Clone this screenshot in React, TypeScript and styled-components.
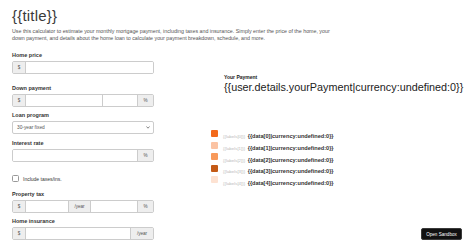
import React from 'react'
import styled, { createGlobalStyle } from 'styled-components'

const GlobalStyle = createGlobalStyle`
  html, body {
    margin: 0;
    padding: 0;
    background: #fff;
  }
  body {
    font-family: "Liberation Sans", Arial, sans-serif;
    color: #333;
  }
`

const Page = styled.div`
  padding: 7px 0 0 12px;
`

const Title = styled.h1`
  margin: 0;
  font-size: 15px;
  line-height: 17px;
  font-weight: 400;
  color: #3a3a3a;
  letter-spacing: 0.2px;
`

const Intro = styled.p`
  margin: 4px 0 0;
  width: 330px;
  font-size: 5.3px;
  line-height: 7px;
  color: #555;
`

const Columns = styled.div`
  display: flex;
  margin-top: 8.5px;
`

const FormColumn = styled.div`
  width: 142px;
  display: flex;
  flex-direction: column;
`

const Group = styled.div<{ $mb: number }>`
  margin-bottom: ${(p) => p.$mb}px;
`

const Label = styled.div`
  font-size: 5.5px;
  line-height: 8px;
  font-weight: 700;
  margin-bottom: 2px;
`

const InputGroup = styled.div`
  display: flex;
  height: 13px;
  box-sizing: border-box;
  border: 1px solid #ccc;
  border-radius: 2px;
  overflow: hidden;
`

const Addon = styled.div<{ $w: number }>`
  width: ${(p) => p.$w}px;
  flex: none;
  display: flex;
  align-items: center;
  justify-content: center;
  background: #eee;
  color: #555;
  font-size: 4.6px;
  & + * {
    border-left: 1px solid #ccc;
  }
`

const Field = styled.div<{ $w?: number }>`
  flex: ${(p) => (p.$w ? 'none' : '1')};
  width: ${(p) => (p.$w ? `${p.$w}px` : 'auto')};
  background: #fff;
  & + * {
    border-left: 1px solid #ccc;
  }
`

const SelectBox = styled.div`
  position: relative;
  height: 13px;
  box-sizing: border-box;
  border: 1px solid #ccc;
  border-radius: 2px;
  display: flex;
  align-items: center;
  padding-left: 4px;
  font-size: 4.8px;
  color: #555;
  svg {
    position: absolute;
    right: 3px;
    top: 4px;
  }
`

const CheckRow = styled.label`
  display: flex;
  align-items: center;
  gap: 4px;
  font-size: 5px;
  margin-bottom: 8px;
`

const Box = styled.span`
  width: 7px;
  height: 7px;
  box-sizing: border-box;
  border: 1px solid #999;
  border-radius: 1.5px;
`

const ResultColumn = styled.div`
  margin-left: 57px;
  padding-top: 22.5px;
  flex: 1;
`

const Payment = styled.div`
  padding-left: 13px;
`

const PaymentLabel = styled.div`
  font-size: 5px;
  line-height: 8px;
  font-weight: 700;
  color: #222;
`

const PaymentValue = styled.div`
  font-size: 10.8px;
  line-height: 12px;
  color: #222;
`

const Legend = styled.ul`
  list-style: none;
  margin: 34.7px 0 0;
  padding: 0;
`

const LegendRow = styled.li`
  display: flex;
  align-items: center;
  height: 11.6px;
  gap: 5px;
`

const Swatch = styled.span<{ $c: string }>`
  width: 7px;
  height: 7px;
  border-radius: 1px;
  background: ${(p) => p.$c};
`

const LegendLabel = styled.span`
  font-size: 4.4px;
  color: #bbb;
  margin-right: 2.5px;
`

const LegendValue = styled.span`
  font-size: 5.6px;
  font-weight: 700;
  color: #333;
`

const SandboxButton = styled.div`
  position: fixed;
  left: 421px;
  top: 228px;
  width: 41px;
  height: 12px;
  box-sizing: border-box;
  background: #111;
  border: 1px solid #3a3a3a;
  border-radius: 2px;
  color: #fff;
  font-size: 4.6px;
  display: flex;
  align-items: center;
  justify-content: center;
`

const swatches = ['#f36a1b', '#fbc3a3', '#f8995a', '#c45a16', '#fde2d2']

export default function App() {
  return (
    <Page>
      <GlobalStyle />
      <Title>{'{{title}}'}</Title>
      <Intro>
        Use this calculator to estimate your monthly mortgage payment, including taxes and insurance. Simply enter the
        price of the home, your down payment, and details about the home loan to calculate your payment breakdown,
        schedule, and more.
      </Intro>
      <Columns>
        <FormColumn>
          <Group $mb={10}>
            <Label>Home price</Label>
            <InputGroup>
              <Addon $w={12}>$</Addon>
              <Field />
            </InputGroup>
          </Group>
          <Group $mb={4}>
            <Label>Down payment</Label>
            <InputGroup>
              <Addon $w={12}>$</Addon>
              <Field />
              <Field $w={34} />
              <Addon $w={15}>%</Addon>
            </InputGroup>
          </Group>
          <Group $mb={5.5}>
            <Label>Loan program</Label>
            <SelectBox>
              30-year fixed
              <svg width="4" height="3" viewBox="0 0 4 3">
                <path d="M0.5 0.5 L2 2.2 L3.5 0.5" fill="none" stroke="#555" strokeWidth="0.7" />
              </svg>
            </SelectBox>
          </Group>
          <Group $mb={13}>
            <Label>Interest rate</Label>
            <InputGroup>
              <Field />
              <Addon $w={15}>%</Addon>
            </InputGroup>
          </Group>
          <CheckRow>
            <Box />
            Include taxes/ins.
          </CheckRow>
          <Group $mb={4}>
            <Label>Property tax</Label>
            <InputGroup>
              <Addon $w={12}>$</Addon>
              <Field />
              <Addon $w={21}>/year</Addon>
              <Field $w={46} />
              <Addon $w={15}>%</Addon>
            </InputGroup>
          </Group>
          <Group $mb={0}>
            <Label>Home insurance</Label>
            <InputGroup>
              <Addon $w={12}>$</Addon>
              <Field />
              <Addon $w={22}>/year</Addon>
            </InputGroup>
          </Group>
        </FormColumn>
        <ResultColumn>
          <Payment>
            <PaymentLabel>Your Payment</PaymentLabel>
            <PaymentValue>{'{{user.details.yourPayment|currency:undefined:0}}'}</PaymentValue>
          </Payment>
          <Legend>
            {swatches.map((c, i) => (
              <LegendRow key={i}>
                <Swatch $c={c} />
                <span>
                  <LegendLabel>{`{{labels[${i}]}}`}</LegendLabel>
                  <LegendValue>{`{{data[${i}]|currency:undefined:0}}`}</LegendValue>
                </span>
              </LegendRow>
            ))}
          </Legend>
        </ResultColumn>
      </Columns>
      <SandboxButton>Open Sandbox</SandboxButton>
    </Page>
  )
}
